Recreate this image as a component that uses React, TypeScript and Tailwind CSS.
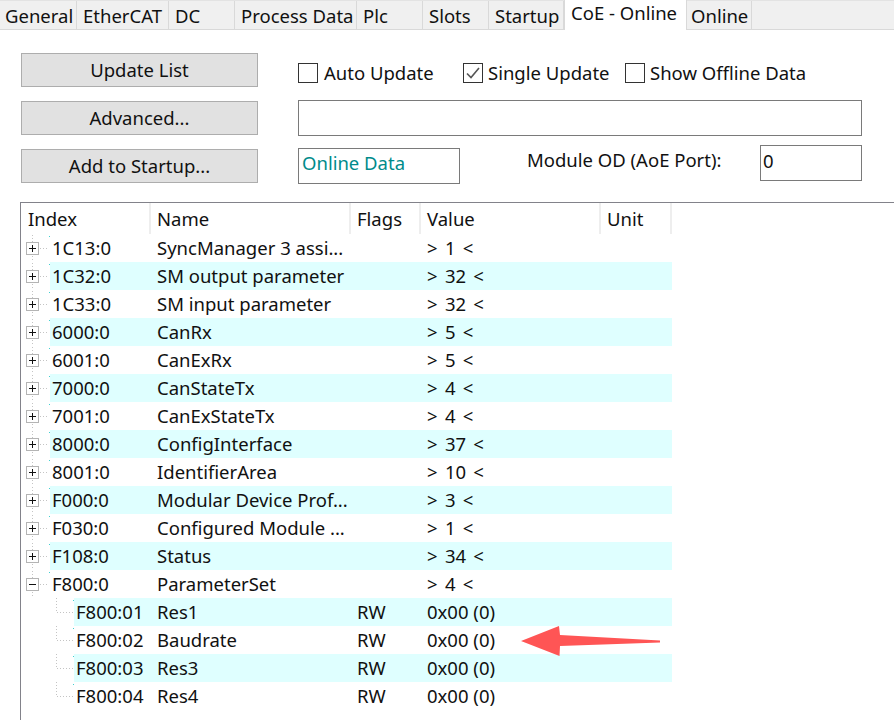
const tabs = [
  { label: "General", w: "w-[77px]", pad: "pl-[5px]" },
  { label: "EtherCAT", w: "w-[92px]", pad: "pl-[6px]" },
  { label: "DC", w: "w-[66px]", pad: "pl-[6px]" },
  { label: "Process Data", w: "w-[122px]", pad: "pl-[6px]" },
  { label: "Plc", w: "w-[66px]", pad: "pl-[6px]" },
  { label: "Slots", w: "w-[66px]", pad: "pl-[6px]" },
  { label: "Startup", w: "w-[75px]", pad: "pl-[6px]" },
  { label: "CoE - Online", w: "w-[123px]", pad: "pl-[6px]", active: true },
  { label: "Online", w: "w-[65px]", pad: "pl-[4px]" },
];

const rows = [
  { index: "1C13:0", name: "SyncManager 3 assi...", value: "> 1 <" },
  { index: "1C32:0", name: "SM output parameter", value: "> 32 <" },
  { index: "1C33:0", name: "SM input parameter", value: "> 32 <" },
  { index: "6000:0", name: "CanRx", value: "> 5 <" },
  { index: "6001:0", name: "CanExRx", value: "> 5 <" },
  { index: "7000:0", name: "CanStateTx", value: "> 4 <" },
  { index: "7001:0", name: "CanExStateTx", value: "> 4 <" },
  { index: "8000:0", name: "ConfigInterface", value: "> 37 <" },
  { index: "8001:0", name: "IdentifierArea", value: "> 10 <" },
  { index: "F000:0", name: "Modular Device Prof...", value: "> 3 <" },
  { index: "F030:0", name: "Configured Module ...", value: "> 1 <" },
  { index: "F108:0", name: "Status", value: "> 34 <" },
  { index: "F800:0", name: "ParameterSet", value: "> 4 <", open: true },
  { index: "F800:01", name: "Res1", flags: "RW", value: "0x00 (0)", child: true },
  { index: "F800:02", name: "Baudrate", flags: "RW", value: "0x00 (0)", child: true },
  { index: "F800:03", name: "Res3", flags: "RW", value: "0x00 (0)", child: true },
  { index: "F800:04", name: "Res4", flags: "RW", value: "0x00 (0)", child: true },
];

function Expander({ open }: { open?: boolean }) {
  return (
    <svg width="29" height="28" className="shrink-0" shapeRendering="crispEdges">
      <path d="M11.500 1V8M11.500 22V27" stroke="#c4c4c4" strokeDasharray="1 2" />
      <path d="M19 14.500H28" stroke="#c4c4c4" strokeDasharray="1 2" />
      <rect x="5.500" y="8.500" width="12" height="12" fill="white" stroke="#b4b4b4" />
      <path d="M8 14.500H15" stroke="#111" />
      {!open && <path d="M11.500 11V18" stroke="#111" />}
      <rect x="28" y="2" width="1" height="1" fill="#40d0d0" />
    </svg>
  );
}

function ChildLines() {
  return (
    <svg width="53" height="28" className="shrink-0" shapeRendering="crispEdges">
      <path d="M35.500 0V14M36 14.500H52" stroke="#c4c4c4" strokeDasharray="1 2" />
      <rect x="52" y="2" width="1" height="1" fill="#40d0d0" />
    </svg>
  );
}

function Check({ on }: { on?: boolean }) {
  return (
    <span className="w-[20px] h-[20px] border border-[#333333] bg-white shrink-0 flex items-center justify-center">
      {on && (
        <svg width="16" height="16" viewBox="0 0 16 16" fill="none">
          <path d="M2 8.500L6 12.500L14 3" stroke="#555555" strokeWidth="1.6" />
        </svg>
      )}
    </span>
  );
}

function Button({ label }: { label: string }) {
  return (
    <div className="w-[237px] h-[34px] bg-[#e1e1e1] border border-[#adadad] flex items-center justify-center">
      {label}
    </div>
  );
}

export default function App() {
  return (
    <div className="relative w-[894px] h-[720px] overflow-hidden bg-white text-[18.5px] leading-[24px] text-[#111111] font-['Noto_Sans','Open_Sans',sans-serif]">
      {/* tab strip */}
      <div className="flex h-[30px] bg-[#f0f0f0] border-b border-[#d9d9d9] border-t border-t-[#e3e3e3]">
        {tabs.map((t) =>
          t.active ? (
            <div
              key={t.label}
              className={`${t.w} ${t.pad} h-[30px] -mt-px bg-white pt-px border-x border-[#d9d9d9]`}
            >
              {t.label}
            </div>
          ) : (
            <div key={t.label} className={`${t.w} ${t.pad} pt-[3px] border-r border-[#d9d9d9]`}>
              {t.label}
            </div>
          ),
        )}
      </div>

      {/* controls */}
      <div className="flex pl-[21px] pt-[23px] h-[172px]">
        <div className="flex flex-col gap-[14px]">
          <Button label="Update List" />
          <Button label="Advanced..." />
          <Button label="Add to Startup..." />
        </div>
        <div className="ml-[40px] w-[564px]">
          <div className="flex items-center h-[20px] mt-[10px]">
            <Check />
            <span className="ml-[6px] w-[139px]">Auto Update</span>
            <Check on />
            <span className="ml-[5px] w-[137px]">Single Update</span>
            <Check />
            <span className="ml-[5px]">Show Offline Data</span>
          </div>
          <div className="h-[36px] mt-[17px] border border-[#7a7a7a]" />
          <div className="flex mt-[9px]">
            <div className="w-[162px] h-[36px] mt-[3px] border border-[#7a7a7a] pl-[3px] pt-[2px] text-[#008b8b]">
              Online Data
            </div>
            <div className="ml-[67px] pt-[3px] w-[233px]">Module OD (AoE Port):</div>
            <div className="w-[102px] h-[36px] border border-[#7a7a7a] pl-[2px] pt-[3px]">0</div>
          </div>
        </div>
      </div>

      {/* object list */}
      <div className="ml-[20px] h-[518px] border-l border-t border-[#82828a]">
        <div className="flex h-[31px] items-start">
          <div className="w-[130px] h-[31px] pl-[7px] pt-[4px] border-r-2 border-[#eeeeee]">Index</div>
          <div className="w-[200px] h-[31px] pl-[6px] pt-[4px] border-r-2 border-[#eeeeee]">Name</div>
          <div className="w-[70px] h-[31px] pl-[6px] pt-[4px] border-r-2 border-[#eeeeee]">Flags</div>
          <div className="w-[180px] h-[31px] pl-[6px] pt-[4px] border-r-2 border-[#eeeeee]">Value</div>
          <div className="w-[71px] h-[31px] pl-[6px] pt-[4px] border-r-2 border-[#eeeeee]">Unit</div>
        </div>
        {rows.map((r, i) => (
          <div key={r.index} className="flex h-[28px] w-[651px]">
            {r.child ? <ChildLines /> : <Expander open={r.open} />}
            <div className={`flex flex-1 h-[28px] leading-[28px] ${i % 2 === 1 ? "bg-[#dfffff]" : ""}`}>
              <div className={`${r.child ? "w-[80px]" : "w-[104px]"} pl-[2px]`}>{r.index}</div>
              <div className="w-[200px] pl-[3px] whitespace-nowrap">{r.name}</div>
              <div className="w-[70px] pl-[3px]">{r.flags}</div>
              <div className={`pl-[3px] ${r.child ? "" : "[word-spacing:2.5px]"}`}>{r.value}</div>
            </div>
          </div>
        ))}
      </div>

      {/* red annotation arrow */}
      <svg width="150" height="40" viewBox="0 0 150 40" className="absolute left-[516px] top-[621px]">
        <path d="M5 20L43 5L44 14L144 19.500V21.500L44 25L43.500 35Z" fill="#ff5555" />
      </svg>
    </div>
  );
}
